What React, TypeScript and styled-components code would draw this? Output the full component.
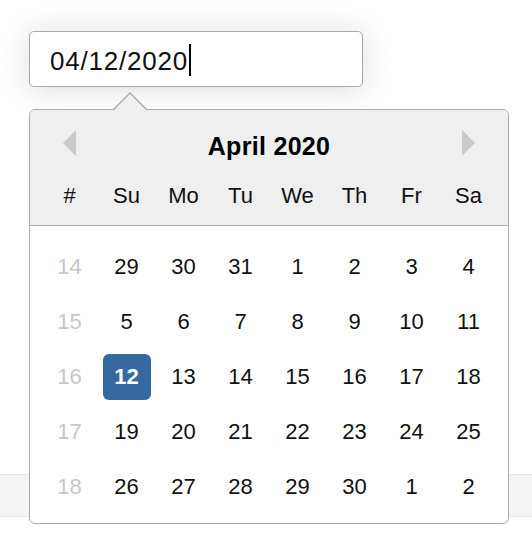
import styled, { createGlobalStyle } from "styled-components";

const GlobalStyle = createGlobalStyle`
    body {
        margin: 0;
        background: #fff;
        font-family: "Liberation Sans", Arial, sans-serif;
        color: #111;
    }
`;

const Page = styled.div`
    box-sizing: border-box;
    padding-top: 31px;
    width: 532px;
    height: 552px;
    overflow: hidden;
`;

const FieldWrap = styled.div`
    position: relative;
    margin-left: 29px;
    width: 334px;
`;

const Field = styled.div`
    box-sizing: border-box;
    height: 56px;
    display: flex;
    align-items: center;
    padding: 5px 0 0 20px;
    border: 1px solid #ababab;
    border-radius: 5px;
    background: #fff;
    box-shadow: 0 2px 30px rgba(0, 0, 0, 0.15);
    font-size: 26px;
    letter-spacing: 0.8px;
    color: #111;
`;

const Caret = styled.span`
    display: inline-block;
    width: 2px;
    height: 32px;
    margin: -3px 0 0 1px;
    background: #000;
`;

const Popup = styled.div`
    position: absolute;
    top: 78px;
    left: 0;
    box-sizing: border-box;
    width: 480px;
    border: 1px solid #ababab;
    border-radius: 6px;
    background: #fff;

    &::before,
    &::after {
        content: "";
        position: absolute;
        border-style: solid;
        border-color: transparent;
    }
    &::before {
        top: -18px;
        left: 83px;
        border-width: 0 17px 17px;
        border-bottom-color: #ababab;
    }
    &::after {
        top: -16px;
        left: 84px;
        border-width: 0 16px 16px;
        border-bottom-color: #efefef;
    }
`;

const Header = styled.div`
    padding: 11px 11px 4px;
    background: #efefef;
    border-bottom: 1px solid #ababab;
    border-radius: 5px 5px 0 0;
`;

const TitleRow = styled.div`
    display: grid;
    grid-template-columns: 57px 1fr 57px;
    height: 50px;
`;

const Title = styled.div`
    display: flex;
    align-items: center;
    justify-content: center;
    font-size: 25px;
    font-weight: 700;
    letter-spacing: 0.3px;
    color: #000;
`;

const NavArrow = styled.span<{ $dir: "left" | "right" }>`
    justify-self: center;
    margin-top: 9px;
    width: 0;
    height: 0;
    border-top: 13px solid transparent;
    border-bottom: 13px solid transparent;
    ${({ $dir }) =>
        $dir === "left"
            ? "border-right: 13px solid #cacaca;"
            : "border-left: 13px solid #cacaca;"}
`;

const Grid = styled.div<{ $rowHeight: number }>`
    display: grid;
    grid-template-columns: repeat(8, 57px);
    grid-auto-rows: ${({ $rowHeight }) => $rowHeight}px;
    align-items: center;
    justify-items: center;
    font-size: 22px;
`;

const WeekDay = styled.span`
    color: #111;
`;

const Body = styled.div`
    padding: 13px 11px 9px;
`;

const WeekNum = styled.span`
    color: #c8c8c8;
`;

const Day = styled.span<{ $selected?: boolean }>`
    display: flex;
    align-items: center;
    justify-content: center;
    width: 48px;
    height: 46px;
    border-radius: 6px;
    color: ${({ $selected }) => ($selected ? "#fff" : "#111")};
    background: ${({ $selected }) => ($selected ? "#3669a0" : "transparent")};
    font-weight: ${({ $selected }) => ($selected ? 700 : 400)};
`;

const Band = styled.div`
    margin-top: 387px;
    height: 43px;
    box-sizing: border-box;
    background: #f4f4f4;
    border-top: 1px solid #e6e6e6;
    border-bottom: 1px solid #e6e6e6;
`;

const weekDays = ["#", "Su", "Mo", "Tu", "We", "Th", "Fr", "Sa"];

const weeks: { num: number; days: number[] }[] = [
    { num: 14, days: [29, 30, 31, 1, 2, 3, 4] },
    { num: 15, days: [5, 6, 7, 8, 9, 10, 11] },
    { num: 16, days: [12, 13, 14, 15, 16, 17, 18] },
    { num: 17, days: [19, 20, 21, 22, 23, 24, 25] },
    { num: 18, days: [26, 27, 28, 29, 30, 1, 2] },
];

function App() {
    return (
        <Page>
            <GlobalStyle />
            <FieldWrap>
                <Field>
                    04/12/2020
                    <Caret />
                </Field>
                <Popup>
                    <Header>
                        <TitleRow>
                            <NavArrow $dir="left" />
                            <Title>April 2020</Title>
                            <NavArrow $dir="right" />
                        </TitleRow>
                        <Grid $rowHeight={50}>
                            {weekDays.map((d) => (
                                <WeekDay key={d}>{d}</WeekDay>
                            ))}
                        </Grid>
                    </Header>
                    <Body>
                        <Grid $rowHeight={55}>
                            {weeks.map((w) => [
                                <WeekNum key={`w${w.num}`}>{w.num}</WeekNum>,
                                ...w.days.map((d, i) => (
                                    <Day key={`${w.num}-${i}`} $selected={w.num === 16 && d === 12}>
                                        {d}
                                    </Day>
                                )),
                            ])}
                        </Grid>
                    </Body>
                </Popup>
            </FieldWrap>
            <Band />
        </Page>
    );
}

export default App;
